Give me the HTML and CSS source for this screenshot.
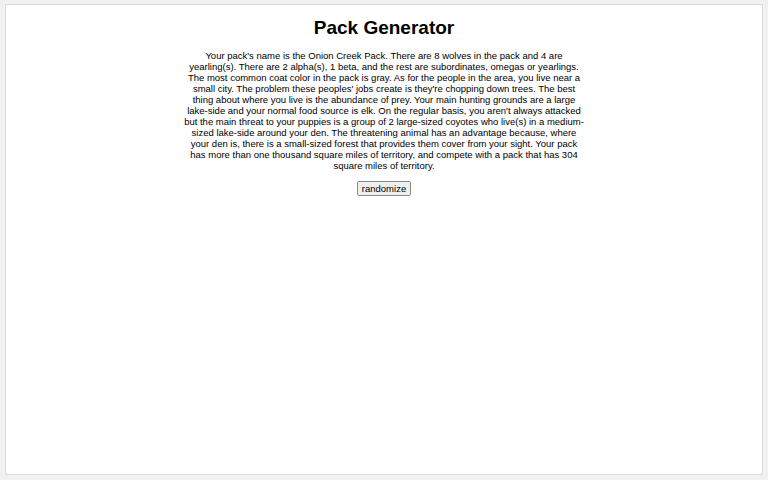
FILE: index.html
```html
<!DOCTYPE html>
<html lang="en">
<head>
    <meta charset="UTF-8">
    <meta name="viewport" content="width=device-width, initial-scale=1.0">
    <title>Pack Generator</title>
    <link rel="stylesheet" href="styles.css">
</head>
<body>
    <div class="container">
        <h1>Pack Generator</h1>
        <p id="packText" class="pack-text">Your pack's name is the Onion Creek Pack. There are 8 wolves in the pack and 4 are yearling(s). There are 2 alpha(s), 1 beta, and the rest are subordinates, omegas or yearlings. The most common coat color in the pack is gray. As for the people in the area, you live near a small city. The problem these peoples' jobs create is they're chopping down trees. The best thing about where you live is the abundance of prey. Your main hunting grounds are a large lake-side and your normal food source is elk. On the regular basis, you aren't always attacked but the main threat to your puppies is a group of 2 large-sized coyotes who live(s) in a medium-sized lake-side around your den. The threatening animal has an advantage because, where your den is, there is a small-sized forest that provides them cover from your sight. Your pack has more than one thousand square miles of territory, and compete with a pack that has 304 square miles of territory.</p>
        <button id="randomize">randomize</button>
    </div>
</body>
</html>
```

FILE: styles.css
```css
body {
    font-family: "Liberation Sans", Arial, sans-serif;
    margin: 0;
    padding: 4px 5px 5px 5px;
    background: #f1f1f1;
}
.container {
    height: 471px;
    background: white;
    border: 1px solid #dcdcdc;
    text-align: center;
    box-sizing: border-box;
}
h1 {
    font-size: 19px;
    margin: 12px 0 11px 0;
    color: #000;
}
.pack-text {
    width: 402px;
    margin: 0 auto;
    font-size: 9.5px;
    color: #000;
}
button {
    margin-top: 10px;
    font-family: "Liberation Sans", Arial, sans-serif;
    font-size: 9.5px;
    padding: 1px 4px;
    background: #efefef;
    border: 1px solid #8a8a8a;
    border-radius: 2px;
    color: #000;
}
```
